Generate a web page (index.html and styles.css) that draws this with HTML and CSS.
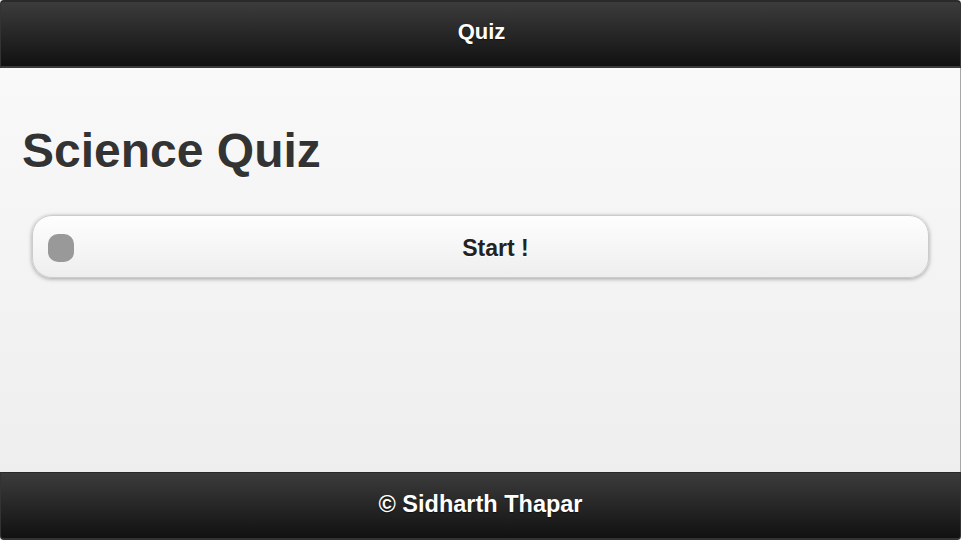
FILE: index.html
```html
<!DOCTYPE html>
<html>
<head>
<meta charset="utf-8">
<title>Quiz</title>
<link rel="stylesheet" href="styles.css">
</head>
<body>
<div class="page">
  <header class="bar header"><h1 class="bar-title">Quiz</h1></header>
  <main class="content">
    <h2 class="heading">Science Quiz</h2>
    <a class="btn" href="#"><span class="btn-icon"></span><span class="btn-text">Start !</span></a>
  </main>
  <footer class="bar footer"><h3 class="bar-title footer-title">© Sidharth Thapar</h3></footer>
</div>
</body>
</html>
```
FILE: styles.css
```css
html, body {
  margin: 0;
  padding: 0;
  height: 100%;
}
body {
  font-family: "Liberation Sans", Arial, Helvetica, sans-serif;
  background: #f0f0f0;
}
.page {
  display: flex;
  flex-direction: column;
  height: 540px;
  width: 961px;
  box-sizing: border-box;
}
.bar {
  box-sizing: border-box;
  height: 68px;
  flex: 0 0 68px;
  border: 1px solid #333;
  border-top-color: #2a2a2a;
  background: linear-gradient(#3c3c3c, #111);
  color: #fff;
  display: flex;
  align-items: center;
  justify-content: center;
}
.header {
  border-top-width: 2px;
  border-bottom: 2px solid #3a3a3a;
  border-radius: 4px 4px 0 0;
}
.footer {
  border-bottom-width: 2px;
  border-radius: 0 0 4px 4px;
}
.bar-title {
  margin: 0 0 4px 2px;
  font-size: 22px;
  font-weight: bold;
  text-shadow: 0 1px 1px #111;
  line-height: 1.2;
}
.footer-title {
  font-size: 23.5px;
  margin: 0 0 3px 0;
}
.content {
  flex: 1 1 auto;
  background: linear-gradient(#f9f9f9, #eeeeee);
  border-right: 1px solid #a8a8a8;
  padding: 55px 0 0 22px;
  display: flex;
  flex-direction: column;
}
.heading {
  margin: 0;
  font-size: 48px;
  line-height: 56px;
  font-weight: bold;
  color: #333;
  text-shadow: 0 1px 0 #fff;
}
.btn {
  margin: 36px 31px 0 10px;
  box-sizing: border-box;
  height: 63px;
  border: 1px solid #cccccc;
  border-radius: 20px;
  background: linear-gradient(#fefefe, #eeeeee);
  box-shadow: 0 1px 4px rgba(0, 0, 0, 0.35);
  display: flex;
  align-items: center;
  position: relative;
  padding: 0 15px 0 45px;
  text-decoration: none;
}
.btn-icon {
  position: absolute;
  left: 15px;
  top: 18px;
  width: 26px;
  height: 28px;
  border-radius: 10px;
  background: #999999;
}
.btn-text {
  flex: 1;
  text-align: center;
  font-size: 23px;
  font-weight: bold;
  color: #222;
  text-shadow: 0 1px 0 #fff;
  margin-top: 4px;
}
```
